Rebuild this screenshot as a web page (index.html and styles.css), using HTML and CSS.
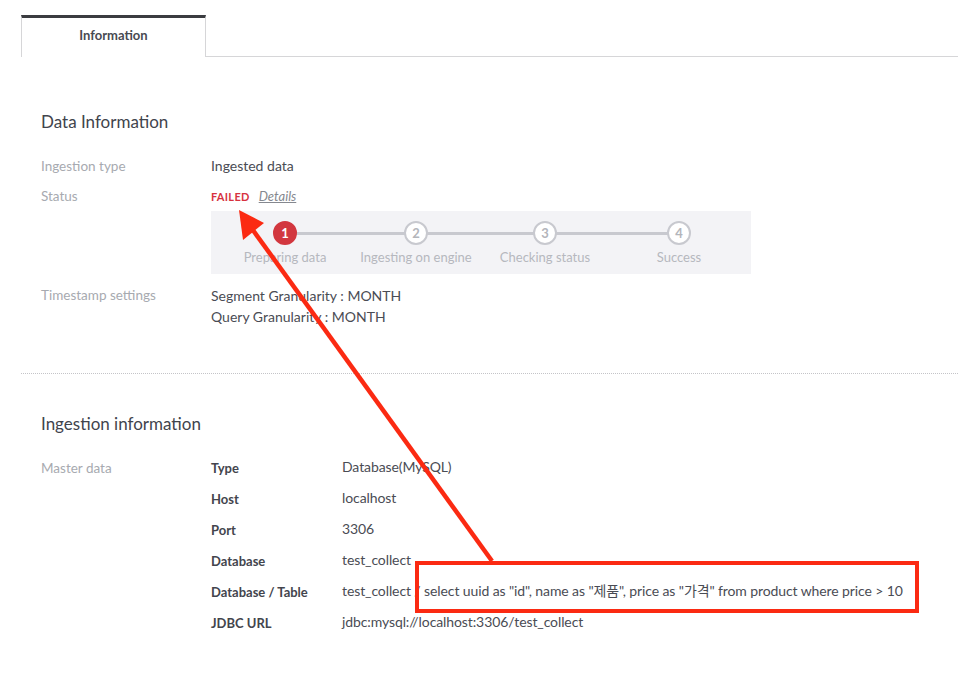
FILE: index.html
```html
<!DOCTYPE html>
<html lang="en">
<head>
<meta charset="utf-8">
<title>Information</title>
<link rel="stylesheet" href="styles.css">
</head>
<body>
<div class="page">
  <div class="tabs">
    <div class="tab tab-active">Information</div>
    <div class="tab-rest"></div>
  </div>

  <section class="section section-data">
    <h2 class="section-title">Data Information</h2>
    <div class="row">
      <div class="label">Ingestion type</div>
      <div class="value">Ingested data</div>
    </div>
    <div class="row">
      <div class="label">Status</div>
      <div class="value">
        <div class="status-line"><span class="failed">FAILED</span><a class="details">Details</a></div>
        <div class="stepper">
          <div class="step step-failed"><span class="step-num">1</span><span class="step-label">Preparing data</span></div>
          <div class="step"><span class="step-num">2</span><span class="step-label">Ingesting on engine</span></div>
          <div class="step"><span class="step-num">3</span><span class="step-label">Checking status</span></div>
          <div class="step"><span class="step-num">4</span><span class="step-label">Success</span></div>
        </div>
      </div>
    </div>
    <div class="row">
      <div class="label">Timestamp settings</div>
      <div class="value value-lines">
        <div>Segment Granularity : MONTH</div>
        <div>Query Granularity : MONTH</div>
      </div>
    </div>
  </section>

  <div class="divider"></div>

  <section class="section section-ingest">
    <h2 class="section-title">Ingestion information</h2>
    <div class="row">
      <div class="label">Master data</div>
      <div class="kv">
        <div class="kv-row"><div class="kv-key">Type</div><div class="kv-val">Database(MySQL)</div></div>
        <div class="kv-row"><div class="kv-key">Host</div><div class="kv-val">localhost</div></div>
        <div class="kv-row"><div class="kv-key">Port</div><div class="kv-val">3306</div></div>
        <div class="kv-row"><div class="kv-key">Database</div><div class="kv-val">test_collect</div></div>
        <div class="kv-row"><div class="kv-key">Database / Table</div><div class="kv-val">test_collect / select uuid as "id", name as "제품", price as "가격" from product where price &gt; 10</div></div>
        <div class="kv-row"><div class="kv-key">JDBC URL</div><div class="kv-val">jdbc:mysql://localhost:3306/test_collect</div></div>
      </div>
    </div>
  </section>

  <svg class="annotation" width="958" height="675" viewBox="0 0 958 675" aria-hidden="true">
    <line x1="492" y1="561" x2="250" y2="226" stroke="#fb2a12" stroke-width="4.5"/>
    <polygon points="239,210 243,240 264,223" fill="#fb2a12"/>
    <rect x="417" y="563" width="500" height="48" fill="none" stroke="#fb2a12" stroke-width="4"/>
  </svg>
</div>
</body>
</html>
```

FILE: styles.css
```css
* { box-sizing: border-box; }

html, body {
  margin: 0;
  padding: 0;
  background: #ffffff;
}

body {
  font-family: "Lato", "Noto Sans CJK KR", sans-serif;
  color: #4a4c54;
  font-size: 14px;
}

.page {
  position: relative;
  width: 958px;
  height: 675px;
  padding: 15px 0 0 21px;
  overflow: hidden;
}

/* Tabs */
.tabs {
  display: flex;
  height: 42px;
}

.tab {
  width: 185px;
  display: flex;
  align-items: center;
  justify-content: center;
  font-size: 13px;
  font-weight: 700;
  color: #484a52;
}

.tab-active {
  border-top: 3px solid #3b3c40;
  border-left: 1px solid #d6d6d8;
  border-right: 1px solid #d6d6d8;
  padding-bottom: 5px;
}

.tab-rest {
  flex: 1;
  border-bottom: 1px solid #d6d6d8;
}

/* Sections */
.section {
  padding-left: 20px;
}

.section-data {
  padding-top: 53px;
  padding-bottom: 36px;
}

.section-ingest {
  padding-top: 38px;
}

.section-title {
  margin: 0 0 22px;
  font-size: 17px;
  line-height: 24px;
  font-weight: 400;
  color: #41444c;
}

.row {
  display: flex;
  margin-bottom: 10px;
  line-height: 20px;
}

.label {
  width: 170px;
  flex: none;
  color: #a7aab0;
  font-size: 13.5px;
}

.value {
  flex: 1;
}

.value-lines {
  line-height: 21px;
}

.status-line {
  display: flex;
  align-items: baseline;
  gap: 9px;
}

.failed {
  color: #d7323f;
  font-weight: 700;
  font-size: 11px;
  letter-spacing: 0.3px;
}

.details {
  color: #85888f;
  font-style: italic;
  text-decoration: underline;
  font-size: 13px;
}

/* Stepper */
.stepper {
  position: relative;
  width: 540px;
  height: 63px;
  margin-top: 4px;
  margin-bottom: 1px;
  background: #f3f3f6;
  display: grid;
  grid-template-columns: 148px 114px 144px 124px;
  padding-top: 10px;
}

.stepper::before {
  content: "";
  position: absolute;
  top: 21px;
  left: 74px;
  width: 394px;
  height: 3px;
  background: #c8c9cf;
}

.step {
  position: relative;
  display: flex;
  flex-direction: column;
  align-items: center;
}

.step-num {
  position: relative;
  z-index: 1;
  width: 24px;
  height: 24px;
  border-radius: 50%;
  border: 2px solid #c8c9cf;
  background: #ffffff;
  color: #b3b5bb;
  font-size: 13px;
  font-weight: 700;
  display: flex;
  align-items: center;
  justify-content: center;
  line-height: 1;
}

.step-failed .step-num {
  background: #d2373f;
  border-color: #d2373f;
  color: #ffffff;
}

.step-label {
  margin-top: 2px;
  font-size: 13px;
  color: #b6b8be;
  white-space: nowrap;
}

/* Divider */
.divider {
  border-top: 1px dotted #c4c4c8;
}

/* Key/value table */
.kv {
  flex: 1;
  margin-top: -1px;
}

.kv-row {
  display: flex;
  align-items: baseline;
  height: 31px;
}

.kv-key {
  width: 131px;
  flex: none;
  font-weight: 700;
  font-size: 13px;
  color: #43454d;
  position: relative;
  top: 1px;
}

.kv-val {
  white-space: nowrap;
  letter-spacing: -0.1px;
}

/* Annotation overlay */
.annotation {
  position: absolute;
  top: 0;
  left: 0;
  pointer-events: none;
}
```
